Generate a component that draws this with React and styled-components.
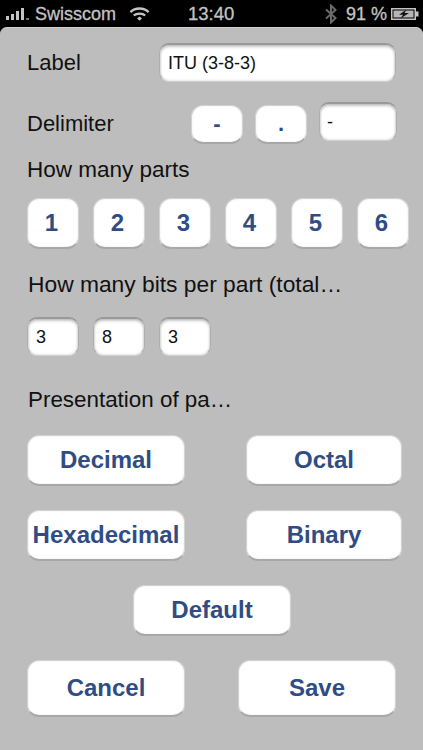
import React from 'react';
import styled, { createGlobalStyle } from 'styled-components';

const GlobalStyle = createGlobalStyle`
  html, body {
    margin: 0;
    padding: 0;
    background: #000;
  }
  * {
    box-sizing: border-box;
  }
`;

const Phone = styled.div`
  width: 423px;
  height: 750px;
  overflow: hidden;
  background: #000;
  font-family: "Liberation Sans", Arial, sans-serif;
`;

const StatusBar = styled.div`
  height: 27px;
  display: flex;
  align-items: center;
  color: #c4c4c4;
  font-weight: 400;
  padding: 1px 0 0 6px;
`;

const StatusText = styled.span`
  width: ${p => p.$width}px;
  margin-left: ${p => p.$left || 0}px;
  font-size: ${p => p.$size || 18}px;
  -webkit-text-stroke: 0.3px #c4c4c4;
  white-space: nowrap;
`;

const Sheet = styled.div`
  height: 723px;
  background: #bdbdbd;
  border-radius: 7px 7px 0 0;
  border-top: 1px solid #cfcfcf;
  padding: 15px 0 0 27px;
`;

const Row = styled.div`
  display: flex;
  align-items: ${p => p.$align || 'center'};
  gap: ${p => p.$gap ?? 14}px;
  margin-top: ${p => p.$top || 0}px;
`;

const Caption = styled.div`
  color: #111;
  font-size: ${p => p.$size || 22}px;
  line-height: 26px;
  margin-top: ${p => p.$top || 0}px;
  margin-left: ${p => p.$left || 0}px;
  width: ${p => (p.$width ? `${p.$width}px` : 'auto')};
  flex: none;
  white-space: nowrap;
`;

const Button = styled.div`
  width: ${p => p.$width || 158}px;
  height: ${p => p.$height || 50}px;
  margin-left: ${p => p.$left || 0}px;
  padding-right: ${p => p.$shift || 0}px;
  flex: none;
  display: flex;
  align-items: center;
  justify-content: center;
  background: #fff;
  border-radius: 12px;
  border: 1px solid #d2d2d2;
  border-bottom: 2px solid #a8a8a8;
  box-shadow: inset 0 0 2px rgba(0, 0, 0, 0.1);
  color: #2f4d84;
  font-size: ${p => p.$size || 24}px;
  font-weight: 700;
`;

const Field = styled.div`
  width: ${p => p.$width}px;
  height: ${p => p.$height || 39}px;
  margin-top: ${p => p.$top || 0}px;
  flex: none;
  display: flex;
  align-items: ${p => p.$align || 'center'};
  padding: ${p => p.$pad || '1px 0 0 8px'};
  background: #fff;
  border-radius: 10px;
  border: 1px solid #adadad;
  border-top: 2px solid #999;
  border-bottom-color: #d0d0d0;
  box-shadow: inset 0 2px 3px rgba(0, 0, 0, 0.2), inset 0 0 3px rgba(0, 0, 0, 0.18);
  color: #111;
  font-size: 18px;
`;

const Signal = () => (
  <svg width="26" height="14" viewBox="0 0 26 14">
    <rect x="0" y="9" width="3" height="4" fill="#c4c4c4" />
    <rect x="5" y="7" width="3" height="6" fill="#c4c4c4" />
    <rect x="10" y="4" width="3" height="9" fill="#c4c4c4" />
    <rect x="15" y="1" width="3" height="12" fill="#c4c4c4" />
    <rect x="20" y="11" width="3" height="2" fill="#777" />
  </svg>
);

const Wifi = () => (
  <svg width="21" height="16" viewBox="0 0 22 16" fill="none" stroke="#c4c4c4" strokeWidth="2.4">
    <path d="M1.5 6 C6.5 1 15.5 1 20.5 6" />
    <path d="M5 9.6 C8 6.8 14 6.8 17 9.6" />
    <path d="M8.4 12.6 L11 10.6 L13.6 12.6 L11 15 Z" fill="#c4c4c4" stroke="none" />
  </svg>
);

const Bluetooth = () => (
  <svg width="12" height="20" viewBox="0 0 12 20" fill="none" stroke="#6a6a6a" strokeWidth="2">
    <path d="M1 5.5 L10.5 14 L6 18.5 V1.5 L10.5 6 L1 14.5" />
  </svg>
);

const Battery = () => (
  <svg width="28" height="14" viewBox="0 0 28 14">
    <rect x="0.75" y="1.75" width="23.5" height="10.5" fill="none" stroke="#c4c4c4" strokeWidth="1.5" />
    <rect x="2.5" y="3.5" width="20" height="7" fill="#b5b5b5" />
    <rect x="25" y="4.5" width="2.5" height="5" fill="#c4c4c4" />
    <path d="M15.5 2.5 L8 7.8 H12 L9.5 11.5 L18 6 H13.5 Z" fill="#111" />
  </svg>
);

const App = () => (
  <Phone>
    <GlobalStyle />
    <StatusBar>
      <Signal />
      <StatusText $left={3} $width={94}>Swisscom</StatusText>
      <Wifi />
      <StatusText $left={38} $width={137} $size={18.5}>13:40</StatusText>
      <Bluetooth />
      <StatusText $left={9} $width={45}>91 %</StatusText>
      <Battery />
    </StatusBar>
    <Sheet>
      <Row $gap={0}>
        <Caption $width={132}>Label</Caption>
        <Field $width={237}>ITU (3-8-3)</Field>
      </Row>
      <Row $gap={12} $top={23} $align="flex-start">
        <Caption $width={152} $top={6}>Delimiter</Caption>
        <Button $width={52} $height={39} $size={22}>-</Button>
        <Button $width={52} $height={39} $size={22}>.</Button>
        <Field $width={78} $top={-3} $align="flex-start" $pad="8px 0 0 7px">-</Field>
      </Row>
      <Caption $top={13} $size={22.5}>How many parts</Caption>
      <Row $top={15}>
        {[1, 2, 3, 4, 5, 6].map(n => (
          <Button key={n} $width={52} $height={51} $shift={3}>{n}</Button>
        ))}
      </Row>
      <Caption $top={22} $left={1} $size={22.8}>How many bits per part (total…</Caption>
      <Row $top={20}>
        {[3, 8, 3].map((n, i) => (
          <Field key={i} $width={52}>{n}</Field>
        ))}
      </Row>
      <Caption $top={31} $left={1} $size={22.4}>Presentation of pa…</Caption>
      <Row $top={22} $gap={61}>
        <Button $height={51}>Decimal</Button>
        <Button $width={156} $height={51}>Octal</Button>
      </Row>
      <Row $top={24} $gap={61}>
        <Button $height={51}>Hexadecimal</Button>
        <Button $width={156} $height={51}>Binary</Button>
      </Row>
      <Row $top={24}>
        <Button $left={106} $height={51}>Default</Button>
      </Row>
      <Row $top={24} $gap={53}>
        <Button $height={57}>Cancel</Button>
        <Button $height={57}>Save</Button>
      </Row>
    </Sheet>
  </Phone>
);

export default App;
